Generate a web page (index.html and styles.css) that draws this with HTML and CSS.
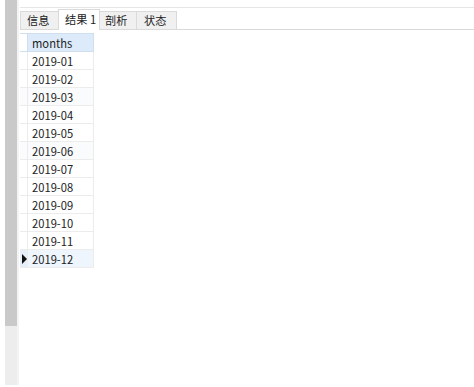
FILE: index.html
```html
<!DOCTYPE html>
<html lang="zh-CN">
<head>
    <meta charset="UTF-8">
    <title>结果 1</title>
    <link rel="stylesheet" href="styles.css">
</head>
<body>
    <div class="window">
        <div class="side">
            <div class="scroll-track">
                <div class="scroll-thumb"></div>
            </div>
        </div>

        <div class="main">
            <div class="top-strip"></div>

            <div class="tabs">
                <div class="tab tab-info">信息</div>
                <div class="tab tab-result active">结果 1</div>
                <div class="tab tab-profile">剖析</div>
                <div class="tab tab-status">状态</div>
                <div class="tab-fill"></div>
            </div>

            <table class="grid">
                <thead>
                    <tr>
                        <th class="marker"></th>
                        <th>months</th>
                    </tr>
                </thead>
                <tbody>
                    <tr><td class="marker"></td><td>2019-01</td></tr>
                    <tr><td class="marker"></td><td>2019-02</td></tr>
                    <tr class="alt"><td class="marker"></td><td>2019-03</td></tr>
                    <tr><td class="marker"></td><td>2019-04</td></tr>
                    <tr><td class="marker"></td><td>2019-05</td></tr>
                    <tr class="alt"><td class="marker"></td><td>2019-06</td></tr>
                    <tr><td class="marker"></td><td>2019-07</td></tr>
                    <tr><td class="marker"></td><td>2019-08</td></tr>
                    <tr><td class="marker"></td><td>2019-09</td></tr>
                    <tr><td class="marker"></td><td>2019-10</td></tr>
                    <tr><td class="marker"></td><td>2019-11</td></tr>
                    <tr class="current"><td class="marker"><span class="arrow"></span></td><td>2019-12</td></tr>
                </tbody>
            </table>
        </div>
    </div>
</body>
</html>
```

FILE: styles.css
```css
body {
    margin: 0;
    padding: 0;
    background: #fff;
    font-family: "Noto Sans CJK SC", "Noto Sans", sans-serif;
    font-size: 11.2px;
    color: #222;
}

.window {
    display: flex;
    height: 387px;
    overflow: hidden;
}

.side {
    width: 20px;
    flex-shrink: 0;
    padding-left: 5px;
    box-sizing: border-box;
}

.scroll-track {
    width: 12px;
    height: 385px;
    background: #ededed;
    border-right: 2px solid #f3f3f3;
    display: flex;
    flex-direction: column;
}

.scroll-thumb {
    height: 326px;
    background: #c9c9c9;
}

.main {
    flex: 1;
}

.top-strip {
    height: 7px;
    border-bottom: 1px solid #e6e6e6;
}

.tabs {
    display: flex;
    align-items: flex-end;
    height: 21px;
    border-bottom: 1px solid #d9d9d9;
}

.tab {
    box-sizing: border-box;
    height: 18px;
    line-height: 17px;
    padding-left: 6px;
    white-space: nowrap;
    background: #f0f0f0;
    border: 1px solid #dadada;
    border-bottom: none;
    margin-right: -1px;
    color: #222;
}

.tab-info {
    width: 39px;
}

.tab-result {
    width: 42px;
}

.tab-profile {
    width: 38px;
    padding-left: 5px;
}

.tab-status {
    width: 41px;
    padding-left: 7px;
}

.tab.active {
    height: 21px;
    line-height: 19px;
    background: #fff;
    margin-bottom: -1px;
    padding-left: 6px;
    position: relative;
}

.tab-fill {
    flex: 1;
}

.grid {
    border-collapse: collapse;
    margin-top: 3px;
}

.grid th,
.grid td {
    height: 17px;
    padding: 0 4px;
    border: 1px solid #ececec;
    text-align: left;
    font-weight: normal;
    line-height: 16px;
    width: 57px;
}

.grid th {
    background: #dceafa;
    border-color: #cfdff0;
}

.grid .marker {
    width: 7px;
    padding: 0;
    background: #fff;
    border-left: none;
}

.grid tr.alt td {
    background: #fafbfd;
}

.grid tr.current td {
    background: #eef5fd;
}

.grid tr.current td.marker {
    background: #e5eef9;
}

.arrow {
    display: block;
    width: 0;
    height: 0;
    margin-left: 2px;
    border-top: 5px solid transparent;
    border-bottom: 5px solid transparent;
    border-left: 5px solid #111;
}
```
